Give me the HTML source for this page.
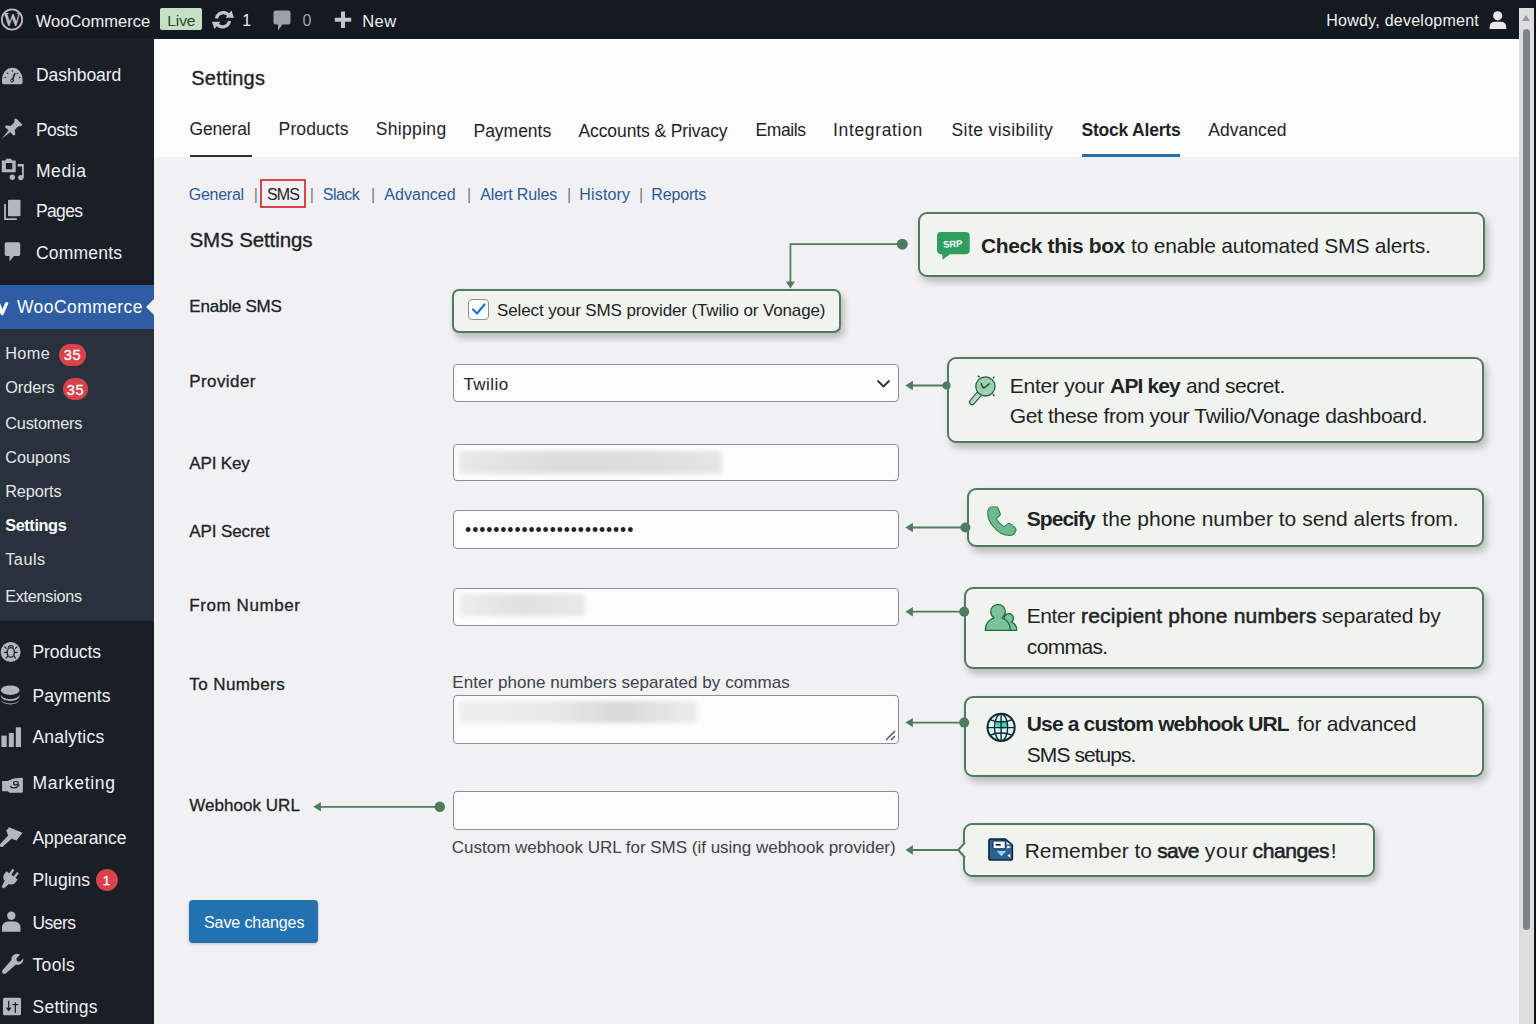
<!DOCTYPE html>
<html lang="en">
<head>
<meta charset="utf-8">
<title>Settings ‹ WooCommerce — Stock Alerts SMS</title>
<style>
html,body{margin:0;padding:0;}
body{width:1536px;height:1024px;overflow:hidden;position:relative;background:#f1f0f2;font-family:"Liberation Sans",sans-serif;}
.abs,.t{position:absolute;}
.t{white-space:pre;line-height:1;}
#bar{left:0;top:0;width:1536px;height:39px;background:#151921;}
#side{left:0;top:39px;width:154px;height:985px;background:#1a1e27;}
#sub{left:0;top:329px;width:154px;height:292px;background:#28313c;}
#act{left:0;top:285px;width:154px;height:44px;background:#2e5da4;}
#hdr{left:154px;top:39px;width:1365px;height:118px;background:#fdfdfd;}
.inp{position:absolute;left:453px;width:444px;background:#fdfdfd;border:1px solid #8c8f94;border-radius:4px;}
.blur{position:absolute;border-radius:3px;filter:blur(2.2px);}
.co{position:absolute;box-sizing:border-box;background:#f1f4ee;border:2px solid #4f7b5f;border-radius:9px;box-shadow:3px 5px 7px rgba(40,50,45,.28);}
.badge{position:absolute;background:#d8434b;border-radius:50%;}
svg{position:absolute;overflow:visible;}
</style>
</head>
<body>
<div id="bar" class="abs"></div>
<div id="side" class="abs"></div>
<div id="sub" class="abs"></div>
<div id="act" class="abs"></div>
<div class="abs" style="left:146px;top:299px;width:0;height:0;border-top:8px solid transparent;border-bottom:8px solid transparent;border-right:8px solid #f1f0f2;"></div>
<div id="hdr" class="abs"></div>
<svg style="left:0;top:0" width="1536" height="1024" viewBox="0 0 1536 1024">
<!-- admin bar: WP logo -->
<circle cx="12" cy="19.5" r="10.2" fill="none" stroke="#b9bcc1" stroke-width="1.8"/>
<text x="12" y="25.8" text-anchor="middle" font-family="'Liberation Serif',serif" font-weight="bold" font-size="18" fill="#b9bcc1">W</text>
<!-- refresh -->
<g fill="none" stroke="#c3c5c9" stroke-width="3.2">
<path d="M216.5 18.5 A7 7 0 0 1 229 15.5"/>
<path d="M229.5 21 A7 7 0 0 1 217 24"/>
</g>
<path d="M225.5 17.8 L234 17.8 L231.5 10.5 Z" fill="#c3c5c9"/>
<path d="M220.5 21.8 L212 21.8 L214.5 29 Z" fill="#c3c5c9"/>
<!-- comment bubble in bar -->
<path d="M275.5 10.5 h13 a2 2 0 0 1 2 2 v10 a2 2 0 0 1 -2 2 h-6 l-4.5 6 v-6 h-2.5 a2 2 0 0 1 -2 -2 v-10 a2 2 0 0 1 2 -2 z" fill="#9ca1a7"/>
<!-- plus -->
<path d="M341 11.5 h4 v6.3 h6.2 v4 h-6.2 v6.3 h-4 v-6.3 h-6.2 v-4 h6.2 z" fill="#c3c5c9"/>
<!-- user -->
<circle cx="1497.7" cy="15.8" r="4.6" fill="#e8e6ea"/>
<path d="M1489.6 29 v-2.3 a5 5 0 0 1 5 -5 h6.6 a5 5 0 0 1 5 5 v2.3 z" fill="#e8e6ea"/>
<g fill="#b2b6bd">
<!-- dashboard -->
<path d="M2 79.4 a10.3 11.6 0 0 1 20.6 0 v2.9 a2 2 0 0 1 -2 2 h-16.6 a2 2 0 0 1 -2 -2 z"/>
<!-- posts pin -->
<g transform="translate(19.2 121.4) rotate(45)"><path d="M-4.6 0 h9.2 v2.4 l-1.8 1.6 v5.2 l3.6 2.6 v2.2 h-12.8 v-2.2 l3.6 -2.6 v-5.2 l-1.8 -1.6 z M-1.3 14 h2.6 l-1.3 10.6 z"/></g>
<!-- media -->
<path d="M1.8 160.5 h3.5 l1.2 -1.8 h4.5 l1.2 1.8 h3.5 v11.8 h-13.9 z M5.9 163 v6.2 h6.4 v-6.2 z" fill-rule="evenodd"/>
<circle cx="12.3" cy="177.2" r="2.7"/><circle cx="20.8" cy="177.6" r="2.7"/>
<path d="M17.6 164 h6.2 v13.6 h-1.8 v-11 h-4.4 z"/>
<!-- pages -->
<rect x="8" y="199.8" width="12.5" height="16.4" rx="1"/>
<path d="M4.1 204 h1.8 v14.3 h11 v1.8 h-12.8 z"/>
<!-- comments -->
<path d="M6.4 242.2 h12.1 a1.7 1.7 0 0 1 1.7 1.7 v10.4 a1.7 1.7 0 0 1 -1.7 1.7 h-4.6 l-4.4 5.6 v-5.6 h-3.1 a1.7 1.7 0 0 1 -1.7 -1.7 v-10.4 a1.7 1.7 0 0 1 1.7 -1.7 z"/>
<!-- products -->
<circle cx="10.6" cy="652" r="10"/>
<!-- payments -->
<ellipse cx="10.2" cy="690.2" rx="9.3" ry="4.8"/>
<path d="M0.9 694.6 a9.3 4.6 0 0 0 18.6 0 v1.6 a9.3 4.8 0 0 1 -18.6 0 z"/>
<path d="M0.9 699 a9.3 4.6 0 0 0 18.6 0 v0.6 a9.3 4.8 0 0 1 -18.6 0 z"/>
<!-- analytics -->
<rect x="1.4" y="735.6" width="5.3" height="11.4"/><rect x="8.8" y="733" width="5" height="14"/><rect x="15.8" y="727.3" width="5.2" height="19.7"/>
<!-- marketing -->
<path d="M2.1 781 h5.5 l6 -2.4 l8 -0.8 a1.3 1.3 0 0 1 1.3 1.3 v12.4 a1.3 1.3 0 0 1 -1.3 1.3 h-12 l-2 -1.6 h-5.5 z"/>
<!-- appearance brush -->
<path d="M9 827.3 l13.5 5.5 l-6 7.6 l-5 -1.6 l-8.5 7.6 a1.8 1.8 0 0 1 -2.6 -2.6 l7.8 -8.3 l-2 -4.8 z"/>
<!-- plugins -->
<path d="M12.6 868.8 l1.8 1.3 l-3.2 4.6 l2.4 1.8 l3.4 -4.5 l1.8 1.3 l-3.4 4.6 l2.3 1.7 l-2 2.7 a5.6 5.6 0 0 1 -6.7 1.7 l-5.2 4.4 l-2.2 -1.6 l3.1 -6 a5.6 5.6 0 0 1 -0.3 -6.9 l2 -2.7 l2.9 2.1 z"/>
<!-- users -->
<circle cx="11.3" cy="915.8" r="4.2"/>
<path d="M2 931.8 v-4.5 a5.8 5.8 0 0 1 5.8 -5.8 h6.9 a5.8 5.8 0 0 1 5.8 5.8 v4.5 z"/>
<!-- tools wrench -->
<path d="M15 954.3 a5.6 5.6 0 0 1 5 0.4 l-3.6 3.6 l0.6 2.9 l2.9 0.6 l3.4 -3.4 a5.6 5.6 0 0 1 -7.3 6.2 l-10 8.6 a2.3 2.3 0 0 1 -3.3 -3.3 l8.700000000000001 -9.9 a5.6 5.6 0 0 1 3.6 -5.7 z"/>
<!-- settings -->
<rect x="3" y="997.7" width="18" height="17.6" rx="1.5"/>
</g>
<!-- woo mark -->
<path d="M-1.5 303.6 L2.2 313.6 L6.6 303.6" fill="none" stroke="#fff" stroke-width="3.2" stroke-linecap="round" stroke-linejoin="round"/>
<g fill="none" stroke="#1a1e27" stroke-width="1.2" stroke-linecap="round">
<!-- dashboard needle/dots -->
<path d="M12 81 L14.8 73.6" stroke-width="1.6"/>
<circle cx="12" cy="80.6" r="1.4" fill="#b2b6bd" stroke-width="1"/>
<path d="M5.2 77.5 h0.1 M7.6 73.2 h0.1 M12.2 71 h0.1 M17.4 73.6 h0.1 M19.6 77.6 h0.1" stroke-width="1.5"/>
<!-- products bug -->
<ellipse cx="10.8" cy="652.4" rx="3.6" ry="4.8" stroke-width="1.3"/>
<path d="M8.3 647.3 a2.6 2.2 0 0 1 5 0 M6.2 648.4 l-1.6 -1.6 M15.4 648.4 l1.6 -1.6 M7 652.4 h-2.4 M14.6 652.4 h2.4 M7.6 656.3 l-1.6 1.8 M14 656.3 l1.6 1.8"/>
<!-- marketing detail -->
<path d="M10.5 786.5 c2 2 6 2 8.6 -1.4 M13.6 783.2 a2.3 1.7 0 1 0 4.6 0 a2.3 1.7 0 1 0 -4.6 0"/>
<!-- settings sliders -->
<path d="M8.7 1001.5 v8.5 M15.3 1003 v9.4 M6.8 1008 l1.9 2.2 l1.9 -2.2 M12.8 1004.6 h5" stroke-width="1.3"/>
</g>
</svg>

<!-- scrollbar -->
<div class="abs" style="left:1519px;top:8px;width:15px;height:1016px;background:#dfdedf;"></div>
<div class="abs" style="left:1534px;top:0;width:2px;height:1024px;background:#11141c;"></div>
<div class="abs" style="left:1523px;top:29px;width:7px;height:901px;background:#7b838c;border-radius:4px;"></div>
<div class="abs" style="left:1522px;top:15px;width:0;height:0;border-left:4.5px solid transparent;border-right:4.5px solid transparent;border-bottom:6.5px solid #9a9a9c;"></div>

<div id="adminbar">
<div class="abs" style="left:160px;top:8px;width:42px;height:22px;background:#c5e0c4;border-radius:2px;"></div>
<span class="t" style="left:35.7px;top:12.5px;font-size:16.5px;color:#f0f0f1;letter-spacing:0.03px;">WooCommerce</span>
<span class="t" style="left:167.3px;top:13.2px;font-size:15.5px;color:#2a4a30;letter-spacing:-0.11px;">Live</span>
<span class="t" style="left:242.2px;top:13.0px;font-size:16px;color:#f0f0f1;letter-spacing:0.00px;">1</span>
<span class="t" style="left:302.4px;top:13.0px;font-size:16px;color:#9ca1a7;letter-spacing:0.00px;">0</span>
<span class="t" style="left:362.3px;top:12.5px;font-size:16.5px;color:#f0f0f1;letter-spacing:0.39px;">New</span>
<span class="t" style="left:1326.3px;top:12.5px;font-size:16px;color:#f0f0f1;letter-spacing:0.25px;">Howdy, development</span>
</div>
<div id="adminmenu">
<div class="badge" style="left:58.5px;top:343.5px;width:27px;height:22.5px;border-radius:11px;"></div>
<div class="badge" style="left:62.5px;top:378px;width:25px;height:22px;border-radius:11px;"></div>
<div class="badge" style="left:95.5px;top:869px;width:22px;height:22px;"></div>
<span class="t" style="left:35.9px;top:67.2px;font-size:17.5px;color:#f0f0f1;letter-spacing:-0.02px;">Dashboard</span>
<span class="t" style="left:35.9px;top:121.5px;font-size:17.5px;color:#f0f0f1;letter-spacing:-0.50px;">Posts</span>
<span class="t" style="left:35.9px;top:162.6px;font-size:17.5px;color:#f0f0f1;letter-spacing:0.61px;">Media</span>
<span class="t" style="left:35.9px;top:203.2px;font-size:17.5px;color:#f0f0f1;letter-spacing:-0.63px;">Pages</span>
<span class="t" style="left:35.9px;top:245.4px;font-size:17.5px;color:#f0f0f1;letter-spacing:0.21px;">Comments</span>
<span class="t" style="left:16.9px;top:299.4px;font-size:17.5px;color:#ffffff;letter-spacing:0.44px;">WooCommerce</span>
<span class="t" style="left:32.5px;top:644.2px;font-size:17.5px;color:#f0f0f1;letter-spacing:-0.08px;">Products</span>
<span class="t" style="left:32.5px;top:687.5px;font-size:17.5px;color:#f0f0f1;letter-spacing:0.01px;">Payments</span>
<span class="t" style="left:32.5px;top:729.2px;font-size:17.5px;color:#f0f0f1;letter-spacing:0.20px;">Analytics</span>
<span class="t" style="left:32.5px;top:775.2px;font-size:17.5px;color:#f0f0f1;letter-spacing:0.71px;">Marketing</span>
<span class="t" style="left:32.5px;top:829.9px;font-size:17.5px;color:#f0f0f1;letter-spacing:-0.05px;">Appearance</span>
<span class="t" style="left:32.5px;top:871.7px;font-size:17.5px;color:#f0f0f1;letter-spacing:0.03px;">Plugins</span>
<span class="t" style="left:32.5px;top:914.6px;font-size:17.5px;color:#f0f0f1;letter-spacing:-0.55px;">Users</span>
<span class="t" style="left:32.5px;top:957.2px;font-size:17.5px;color:#f0f0f1;letter-spacing:0.34px;">Tools</span>
<span class="t" style="left:32.5px;top:998.9px;font-size:17.5px;color:#f0f0f1;letter-spacing:0.25px;">Settings</span>
<span class="t" style="left:5.2px;top:344.6px;font-size:16.3px;color:#e4e6e8;letter-spacing:0.42px;">Home</span>
<span class="t" style="left:5.2px;top:379.2px;font-size:16.3px;color:#e4e6e8;letter-spacing:-0.05px;">Orders</span>
<span class="t" style="left:5.2px;top:415.2px;font-size:16.3px;color:#e4e6e8;letter-spacing:-0.18px;">Customers</span>
<span class="t" style="left:5.2px;top:449.2px;font-size:16.3px;color:#e4e6e8;letter-spacing:0.02px;">Coupons</span>
<span class="t" style="left:5.2px;top:482.7px;font-size:16.3px;color:#e4e6e8;letter-spacing:-0.09px;">Reports</span>
<span class="t" style="left:5.2px;top:516.9px;font-size:16.3px;color:#ffffff;letter-spacing:-0.39px;font-weight:bold;">Settings</span>
<span class="t" style="left:5.2px;top:551.2px;font-size:16.3px;color:#e4e6e8;letter-spacing:0.50px;">Tauls</span>
<span class="t" style="left:5.2px;top:587.9px;font-size:16.3px;color:#e4e6e8;letter-spacing:-0.30px;">Extensions</span>
<span class="t" style="left:63.8px;top:347.7px;font-size:14.5px;color:#fff;letter-spacing:0.76px;-webkit-text-stroke:0.3px #fff;">35</span>
<span class="t" style="left:66.8px;top:382.5px;font-size:14.5px;color:#fff;letter-spacing:0.76px;-webkit-text-stroke:0.3px #fff;">35</span>
<span class="t" style="left:102.7px;top:874.0px;font-size:13.5px;color:#fff;letter-spacing:0.00px;-webkit-text-stroke:0.3px #fff;">1</span>
</div>
<div id="content">
<div class="abs" style="left:190px;top:155px;width:62px;height:2px;background:#2c3338;"></div>
<div class="abs" style="left:1082px;top:154px;width:98px;height:3px;background:#2271b1;"></div>
<div class="abs" style="left:260px;top:179px;width:42px;height:25px;border:2px solid #d9444c;"></div>
<!-- fields -->
<div class="co" style="left:452px;top:289px;width:389px;height:44px;border-radius:7px;"></div>
<div class="abs" style="left:468px;top:299px;width:19px;height:19px;border:1px solid #8c8f94;border-radius:4px;background:#fff;"></div>
<svg style="left:468px;top:299px" width="21" height="21" viewBox="0 0 21 21"><path d="M5 10.5 L9 14.5 L16.5 5.5" fill="none" stroke="#1e73c8" stroke-width="2.2" stroke-linecap="round" stroke-linejoin="round"/></svg>
<div class="inp" style="top:364px;height:36px;"></div>
<svg style="left:877px;top:380px" width="13" height="8" viewBox="0 0 13 8"><path d="M1 1 L6.5 6.5 L12 1" fill="none" stroke="#2c3338" stroke-width="1.8" stroke-linecap="round" stroke-linejoin="round"/></svg>
<div class="inp" style="top:444px;height:35px;"></div>
<div class="blur" style="left:459px;top:451px;width:263px;height:23px;background:linear-gradient(90deg,#e8e8e8,#dddddd 35%,#dedede 75%,#e6e6e6);"></div>
<div class="inp" style="top:510px;height:37px;"></div>
<div class="inp" style="top:588px;height:36px;"></div>
<div class="blur" style="left:459px;top:594px;width:126px;height:22px;background:linear-gradient(90deg,#eeeeee,#e0e0e0 50%,#e9e9e9);"></div>
<div class="inp" style="top:695px;height:47px;"></div>
<div class="blur" style="left:459px;top:701px;width:238px;height:22px;background:linear-gradient(90deg,#efefef,#e8e8e8 40%,#d8d8d8 68%,#ededed);"></div>
<svg style="left:885px;top:730px" width="11" height="11" viewBox="0 0 11 11"><path d="M1 10 L10 1 M6 10 L10 6" stroke="#3c434a" stroke-width="1.2" fill="none"/></svg>
<div class="inp" style="top:791px;height:37px;"></div>
<div class="abs" style="left:189px;top:900px;width:129px;height:43px;background:#2271b1;border-radius:4px;box-shadow:0 1px 3px rgba(0,0,0,.2);"></div>
<!--DOTS-->
<svg style="left:0;top:0" width="1536" height="1024" viewBox="0 0 1536 1024">
<g fill="none" stroke="#4f7b5f" stroke-width="1.8">
<path d="M902 244.2 H790.4 V283"/>
<path d="M911 385.5 H947"/>
<path d="M911 527.5 H965"/>
<path d="M911 611.7 H964"/>
<path d="M911 722.6 H964"/>
<path d="M911 850 H960"/>
<path d="M319 806.8 H440"/>
</g>
<g fill="#4f7b5f">
<path d="M785.9 281.5 h9 l-4.5 7 z"/>
<path d="M905.4 385.5 l7.5 -4.7 v9.4 z"/>
<path d="M905.4 527.5 l7.5 -4.7 v9.4 z"/>
<path d="M905.4 611.7 l7.5 -4.7 v9.4 z"/>
<path d="M905.4 722.6 l7.5 -4.7 v9.4 z"/>
<path d="M905.4 850 l7.5 -4.7 v9.4 z"/>
<path d="M313.4 806.8 l7.5 -4.7 v9.4 z"/>
</g>
</svg>

<!-- callouts -->
<div class="co" style="left:918px;top:212px;width:567px;height:65px;"></div>
<div class="co" style="left:947px;top:357px;width:537px;height:86px;"></div>
<div class="co" style="left:967px;top:488px;width:517px;height:59px;"></div>
<div class="co" style="left:964px;top:587px;width:520px;height:82px;"></div>
<div class="co" style="left:964px;top:696px;width:520px;height:81px;"></div>
<div class="co" style="left:963px;top:823px;width:412px;height:54px;"></div>
<svg style="left:0;top:0" width="1536" height="1024" viewBox="0 0 1536 1024">
<!-- dots -->
<g fill="#4f7b5f">
<circle cx="902.3" cy="244.2" r="5.5"/>
<circle cx="946.6" cy="385.5" r="4"/>
<circle cx="965.4" cy="527.5" r="5"/>
<circle cx="964.2" cy="611.7" r="5"/>
<circle cx="964.2" cy="722.6" r="5"/>
<circle cx="439.8" cy="806.8" r="5.2"/>
</g>
<!-- notch of callout 6 -->
<path d="M965 842.5 L958.2 850 L965 857.5" fill="#f1f4ee" stroke="#4f7b5f" stroke-width="2" stroke-linejoin="round"/>
<!-- 1: sms bubble -->
<path d="M941 232 h24.7 a4 4 0 0 1 4 4 v14.2 a4 4 0 0 1 -4 4 h-15.6 l-7.6 5.6 l-0.3 -5.8 a4 4 0 0 1 -5.2 -3.8 v-14.2 a4 4 0 0 1 4 -4 z" fill="#2d9e5f"/>
<text x="952.6" y="247.2" text-anchor="middle" font-family="'Liberation Sans',sans-serif" font-weight="bold" font-size="9.5" fill="#fff" transform="rotate(-4 952.6 243)">SRP</text>
<!-- 2: magnifier -->
<path d="M979.6 393.4 L972.2 402" stroke="#2a6045" stroke-width="6.4" stroke-linecap="round" fill="none"/>
<path d="M979.6 393.4 L972.2 402" stroke="#b3dcc2" stroke-width="4" stroke-linecap="round" fill="none"/>
<circle cx="985.4" cy="386.4" r="9.6" fill="#9dd1b0" stroke="#2a6045" stroke-width="1.3"/>
<path d="M981.4 383.6 c0.4 2.6 1.4 4 2.6 4.4 l5.2 -4.2" fill="none" stroke="#1d5238" stroke-width="1.5" stroke-linecap="round" stroke-linejoin="round"/>
<path d="M977.8 375.8 l1.8 1.4 M994.4 376.6 l-1.4 1.6 M994.2 396 l-1.4 -1.6" stroke="#1d3a2c" stroke-width="1.3" fill="none"/>
<!-- 3: phone -->
<path d="M992 507.3 h4.4 a1.2 1.2 0 0 1 1.1 0.8 l2.3 5.6 a1.5 1.5 0 0 1 -0.4 1.6 l-3.6 3 c1.8 3.6 4.6 6.6 8.4 8.8 l4 -3 a1.6 1.6 0 0 1 1.9 0 l4.800000000000001 4.2 a2 2 0 0 1 0.6 2.2 c-0.8 2.4 -2.8 4.6 -5.4 4.600000000000001 c-6.4 0 -12.2 -3.4 -16.4 -8.6 c-3.6 -4.400000000000001 -5.6 -9.4 -5.6 -13.6 c0 -3.2 1.6 -5.6 3.9 -5.6 z" fill="#6dba8d" stroke="#1f6b42" stroke-width="1.8" stroke-linejoin="round" paint-order="stroke"/>
<!-- 4: users -->
<g fill="#7cc29a" stroke="#1f6b42" stroke-width="1.3" stroke-linejoin="round">
<path d="M1005.2 630.4 h11.6 c0 -4.6 -1.8 -7 -5.6 -8.2 a4.6 4.6 0 1 0 -6 -1 z"/>
<path d="M985.3 630.4 c0 -6.6 2.4 -10.400000000000001 8.6 -12.6 a7.3 7.3 0 1 1 8.2 0 c6 2.2 8.2 6 8.2 12.6 z"/>
</g>
<!-- 5: globe -->
<circle cx="1001.1" cy="727.4" r="13.6" fill="#dff3f3" stroke="#0d2a33" stroke-width="2"/>
<path d="M996.4 721.8 c3 -1.4 8 -1.6 10.6 -0.6 c0.8 2.6 0.6 4.6 -0.2 6.200000000000001 c-3 1.8 -7 1.8 -10 0.2 c-1 -1.8 -1 -4 -0.4 -5.8 z" fill="#45d0b0"/>
<g fill="none" stroke="#0d2a33" stroke-width="1.4">
<path d="M1001.1 714 V741 M987.6 727.6 H1014.6"/>
<ellipse cx="1001.1" cy="727.4" rx="6.6" ry="13.4"/>
<path d="M990 719.6 c6 3.2 16 3.2 22.2 0 M990 735.4 c6 -3.2 16 -3.2 22.2 0"/>
</g>
<!-- 6: floppy -->
<path d="M990.4 839 h15 l7 6 v13.6 a1.5 1.5 0 0 1 -1.5 1.5 h-20.5 a1.5 1.5 0 0 1 -1.5 -1.5 v-18.1 a1.5 1.5 0 0 1 1.5 -1.5 z" fill="#2f6090" stroke="#0d2440" stroke-width="1.5" stroke-linejoin="round"/>
<rect x="993" y="841" width="12.3" height="7.8" rx="1" fill="#f5f7fa" stroke="#0d2440" stroke-width="1"/>
<path d="M995.6 844.8 h5.2" stroke="#0d2440" stroke-width="1.6" fill="none"/>
<path d="M1006.6 841.6 l3.6 2.8 h-3.6 z M1006.8 846.2 h3.8 v1.2 l-3.8 1 z" fill="#e6f2fa"/>
<path d="M996.5 851.1 h9.8 l-4.9 5.2 z" fill="#8fd6f0"/>
<path d="M1007.3 855.4 l3 -1.6 v4 z" fill="#f5f7fa"/>
</svg>

<span class="t" style="left:191.3px;top:67.8px;font-size:20px;color:#1d2327;letter-spacing:0.19px;-webkit-text-stroke:0.35px #1d2327;">Settings</span>
<span class="t" style="left:189.5px;top:120.9px;font-size:17.5px;color:#1d2327;letter-spacing:-0.19px;">General</span>
<span class="t" style="left:278.6px;top:120.9px;font-size:17.5px;color:#1d2327;letter-spacing:0.11px;">Products</span>
<span class="t" style="left:375.7px;top:120.9px;font-size:17.5px;color:#1d2327;letter-spacing:0.34px;">Shipping</span>
<span class="t" style="left:473.5px;top:122.6px;font-size:17.5px;color:#1d2327;letter-spacing:-0.02px;">Payments</span>
<span class="t" style="left:578.5px;top:122.6px;font-size:17.5px;color:#1d2327;letter-spacing:-0.10px;">Accounts &amp; Privacy</span>
<span class="t" style="left:755.5px;top:122.2px;font-size:17.5px;color:#1d2327;letter-spacing:-0.40px;">Emails</span>
<span class="t" style="left:833.0px;top:122.2px;font-size:17.5px;color:#1d2327;letter-spacing:0.66px;">Integration</span>
<span class="t" style="left:951.5px;top:122.2px;font-size:17.5px;color:#1d2327;letter-spacing:0.42px;">Site visibility</span>
<span class="t" style="left:1081.5px;top:122.2px;font-size:17.5px;color:#1d2327;letter-spacing:-0.21px;font-weight:bold;">Stock Alerts</span>
<span class="t" style="left:1208.3px;top:121.8px;font-size:17.5px;color:#1d2327;letter-spacing:0.04px;">Advanced</span>
<span class="t" style="left:188.7px;top:186.8px;font-size:16px;color:#2a5a9a;letter-spacing:-0.25px;">General</span>
<span class="t" style="left:253.8px;top:186.8px;font-size:16px;color:#787c82;letter-spacing:0.00px;">|</span>
<span class="t" style="left:266.9px;top:186.8px;font-size:16px;color:#1d2327;letter-spacing:-0.79px;">SMS</span>
<span class="t" style="left:309.7px;top:186.8px;font-size:16px;color:#787c82;letter-spacing:0.00px;">|</span>
<span class="t" style="left:322.8px;top:186.8px;font-size:16px;color:#2a5a9a;letter-spacing:-0.56px;">Slack</span>
<span class="t" style="left:370.9px;top:186.8px;font-size:16px;color:#787c82;letter-spacing:0.00px;">|</span>
<span class="t" style="left:384.3px;top:186.8px;font-size:16px;color:#2a5a9a;letter-spacing:0.03px;">Advanced</span>
<span class="t" style="left:466.9px;top:186.8px;font-size:16px;color:#787c82;letter-spacing:0.00px;">|</span>
<span class="t" style="left:480.3px;top:186.8px;font-size:16px;color:#2a5a9a;letter-spacing:-0.13px;">Alert Rules</span>
<span class="t" style="left:566.9px;top:186.8px;font-size:16px;color:#787c82;letter-spacing:0.00px;">|</span>
<span class="t" style="left:579.3px;top:186.8px;font-size:16px;color:#2a5a9a;letter-spacing:0.17px;">History</span>
<span class="t" style="left:638.9px;top:186.8px;font-size:16px;color:#787c82;letter-spacing:0.00px;">|</span>
<span class="t" style="left:651.3px;top:186.8px;font-size:16px;color:#2a5a9a;letter-spacing:-0.16px;">Reports</span>
<span class="t" style="left:189.5px;top:230.1px;font-size:20.5px;color:#1d2327;letter-spacing:-0.11px;-webkit-text-stroke:0.35px #1d2327;">SMS Settings</span>
<span class="t" style="left:189.3px;top:297.9px;font-size:17px;color:#1d2327;letter-spacing:-0.21px;-webkit-text-stroke:0.3px #1d2327;">Enable SMS</span>
<span class="t" style="left:189.3px;top:372.6px;font-size:17px;color:#1d2327;letter-spacing:0.40px;-webkit-text-stroke:0.3px #1d2327;">Provider</span>
<span class="t" style="left:189.3px;top:454.8px;font-size:17px;color:#1d2327;letter-spacing:-0.17px;-webkit-text-stroke:0.3px #1d2327;">API Key</span>
<span class="t" style="left:189.3px;top:523.2px;font-size:17px;color:#1d2327;letter-spacing:-0.11px;-webkit-text-stroke:0.3px #1d2327;">API Secret</span>
<span class="t" style="left:189.3px;top:597.2px;font-size:17px;color:#1d2327;letter-spacing:0.57px;-webkit-text-stroke:0.3px #1d2327;">From Number</span>
<span class="t" style="left:189.3px;top:675.9px;font-size:17px;color:#1d2327;letter-spacing:0.41px;-webkit-text-stroke:0.3px #1d2327;">To Numbers</span>
<span class="t" style="left:189.3px;top:797.3px;font-size:17px;color:#1d2327;letter-spacing:0.03px;-webkit-text-stroke:0.3px #1d2327;">Webhook URL</span>
<span class="t" style="left:497.0px;top:302.0px;font-size:17px;color:#1d2327;letter-spacing:-0.12px;">Select your SMS provider (Twilio or Vonage)</span>
<span class="t" style="left:463.5px;top:375.8px;font-size:17px;color:#1d2327;letter-spacing:0.42px;">Twilio</span>
<span class="t" style="left:452.3px;top:673.6px;font-size:17px;color:#3c434a;letter-spacing:0.05px;">Enter phone numbers separated by commas</span>
<span class="t" style="left:451.8px;top:839.0px;font-size:17px;color:#3c434a;letter-spacing:-0.01px;">Custom webhook URL for SMS (if using webhook provider)</span>
<span class="t" style="left:465.1px;top:521.8px;font-size:17.5px;color:#1d2327;letter-spacing:0.92px;">••••••••••••••••••••••••</span>
<span class="t" style="left:204.0px;top:914.8px;font-size:16px;color:#ffffff;letter-spacing:-0.09px;">Save changes</span>
<span class="t" style="left:981.0px;top:234.6px;font-size:21px;color:#1f2328;letter-spacing:-0.39px;font-weight:bold;">Check this box</span>
<span class="t" style="left:1131.0px;top:234.6px;font-size:21px;color:#1f2328;letter-spacing:-0.20px;">to enable automated SMS alerts.</span>
<span class="t" style="left:1009.7px;top:374.7px;font-size:21px;color:#1f2328;letter-spacing:-0.23px;">Enter your</span>
<span class="t" style="left:1110.1px;top:374.7px;font-size:21px;color:#1f2328;letter-spacing:-0.88px;font-weight:bold;">API key</span>
<span class="t" style="left:1186.0px;top:374.7px;font-size:21px;color:#1f2328;letter-spacing:-0.46px;">and secret.</span>
<span class="t" style="left:1009.7px;top:405.2px;font-size:21px;color:#1f2328;letter-spacing:-0.32px;">Get these from your Twilio/Vonage dashboard.</span>
<span class="t" style="left:1026.8px;top:508.2px;font-size:21px;color:#1f2328;letter-spacing:-0.97px;font-weight:bold;">Specify</span>
<span class="t" style="left:1102.3px;top:508.2px;font-size:21px;color:#1f2328;letter-spacing:0.01px;">the phone number to send alerts from.</span>
<span class="t" style="left:1026.8px;top:605.2px;font-size:21px;color:#1f2328;letter-spacing:-0.43px;">Enter</span>
<span class="t" style="left:1081.0px;top:605.2px;font-size:21px;color:#1f2328;letter-spacing:0.20px;-webkit-text-stroke:0.55px #1f2328;">recipient phone numbers</span>
<span class="t" style="left:1321.8px;top:605.2px;font-size:21px;color:#1f2328;letter-spacing:-0.23px;">separated by</span>
<span class="t" style="left:1026.8px;top:635.5px;font-size:21px;color:#1f2328;letter-spacing:-0.63px;">commas.</span>
<span class="t" style="left:1026.8px;top:712.6px;font-size:21px;color:#1f2328;letter-spacing:-0.85px;font-weight:bold;">Use a custom webhook URL</span>
<span class="t" style="left:1297.3px;top:712.6px;font-size:21px;color:#1f2328;letter-spacing:-0.20px;">for advanced</span>
<span class="t" style="left:1026.8px;top:743.9px;font-size:21px;color:#1f2328;letter-spacing:-0.94px;">SMS setups.</span>
<span class="t" style="left:1024.7px;top:839.7px;font-size:21px;color:#1f2328;letter-spacing:0.01px;">Remember to</span>
<span class="t" style="left:1157.3px;top:839.7px;font-size:21px;color:#1f2328;letter-spacing:-0.72px;-webkit-text-stroke:0.55px #1f2328;">save</span>
<span class="t" style="left:1204.7px;top:839.7px;font-size:21px;color:#1f2328;letter-spacing:0.71px;">your</span>
<span class="t" style="left:1252.6px;top:839.7px;font-size:21px;color:#1f2328;letter-spacing:-0.42px;-webkit-text-stroke:0.55px #1f2328;">changes</span>
<span class="t" style="left:1330.8px;top:839.7px;font-size:21px;color:#1f2328;letter-spacing:0.00px;">!</span>
</div>
</body>
</html>
